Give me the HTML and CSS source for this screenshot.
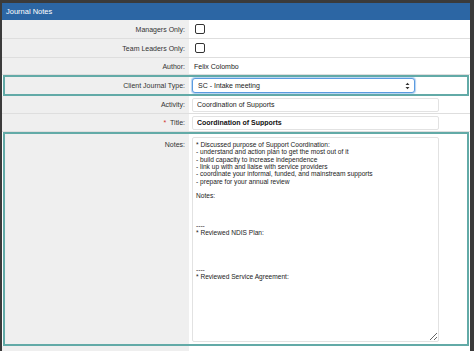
FILE: index.html
```html
<!DOCTYPE html>
<html lang="en">
<head>
  <meta charset="UTF-8">
  <title>Journal Notes</title>
  <link rel="stylesheet" href="styles.css">
</head>
<body>
  <div class="frame">
    <div class="panel">
      <div class="panel-header">Journal Notes</div>

      <div class="row row-check">
        <div class="row-label">Managers Only:</div>
        <div class="row-value"><input type="checkbox" class="check"></div>
      </div>
      <div class="row row-check">
        <div class="row-label">Team Leaders Only:</div>
        <div class="row-value"><input type="checkbox" class="check"></div>
      </div>
      <div class="row row-author">
        <div class="row-label">Author:</div>
        <div class="row-value"><span class="author">Felix Colombo</span></div>
      </div>
      <div class="row row-focus row-type">
        <div class="row-label">Client Journal Type:</div>
        <div class="row-value">
          <div class="select">
            <span>SC - Intake meeting</span>
            <svg class="select-arrows" width="5" height="8" viewBox="0 0 5 8">
              <path d="M0.5 3 L2.5 0.8 L4.5 3 Z M0.5 5 L2.5 7.2 L4.5 5 Z" fill="#333"/>
            </svg>
          </div>
        </div>
      </div>
      <div class="row row-input">
        <div class="row-label">Activity:</div>
        <div class="row-value"><input type="text" class="field" value="Coordination of Supports" spellcheck="false"></div>
      </div>
      <div class="row row-input">
        <div class="row-label"><span class="req">*</span>&nbsp; Title:</div>
        <div class="row-value"><input type="text" class="field field-bold" value="Coordination of Supports" spellcheck="false"></div>
      </div>
      <div class="row row-focus row-notes">
        <div class="row-label">Notes:</div>
        <div class="row-value">
          <textarea class="notes" spellcheck="false">* Discussed purpose of Support Coordination:
- understand and action plan to get the most out of it
- build capacity to increase independence
- link up with and liaise with service providers
- coordinate your informal, funded, and mainstream supports
- prepare for your annual review

Notes:



----
* Reviewed NDIS Plan:




----
* Reviewed Service Agreement:</textarea>
        </div>
      </div>
      <div class="row row-end">
        <div class="row-label"></div>
        <div class="row-value"></div>
      </div>
    </div>
  </div>
</body>
</html>
```

FILE: styles.css
```css
body {
  margin: 0;
  background: #3b3b3b;
  font-family: "Liberation Sans", Arial, sans-serif;
  font-size: 7px;
  color: #333;
}

.frame {
  padding: 3px 4px 0 2px;
}

.panel {
  background: #fff;
}

.panel-header {
  height: 17px;
  display: flex;
  align-items: center;
  padding-left: 4px;
  background: #2c66a4;
  color: #fff;
  font-size: 7.5px;
}

.row {
  display: flex;
  border-bottom: 1px solid #dedede;
}

.row-label {
  width: 187px;
  flex: none;
  box-sizing: border-box;
  padding-right: 4px;
  background: #efefef;
  display: flex;
  align-items: center;
  justify-content: flex-end;
  color: #333;
}

.row-value {
  flex: 1;
  display: flex;
  align-items: center;
  padding-left: 3px;
}

.row-check {
  height: 18px;
}

.row-author {
  height: 16px;
}

.row-author .author {
  padding-left: 2px;
  color: #222;
}

.row-focus {
  margin: 0 1px;
  border: 2px solid #62aaa7;
}

.row-focus .row-label {
  width: 184px;
}

.row-type {
  height: 17px;
}

.row-input {
  height: 17px;
}

.row-notes {
  height: 210px;
}

.row-notes .row-label,
.row-notes .row-value {
  align-items: flex-start;
}

.row-notes .row-label {
  padding-top: 7px;
}

.row-end {
  height: 10px;
  border-bottom: none;
}

.check {
  appearance: none;
  width: 10px;
  height: 10px;
  margin: 0 0 0 3px;
  border: 1px solid #333;
  border-radius: 2px;
  background: #fff;
  box-sizing: border-box;
}

.select {
  width: 223px;
  height: 15px;
  box-sizing: border-box;
  display: flex;
  align-items: center;
  justify-content: space-between;
  padding: 0 4px 0 5px;
  border: 1px solid #5b9be0;
  border-radius: 3px;
  box-shadow: 0 0 1px 1px rgba(91, 155, 224, 0.45);
  background: #fff;
  color: #222;
}

.field {
  width: 247px;
  height: 14px;
  box-sizing: border-box;
  margin: 0;
  padding: 0 4px;
  border: 1px solid #e2e2e2;
  border-radius: 2px;
  font-family: "Liberation Sans", Arial, sans-serif;
  font-size: 7px;
  color: #222;
  outline: none;
}

.field-bold {
  font-weight: 700;
  color: #111;
}

.req {
  color: #d0312d;
}

.notes {
  width: 247px;
  height: 205px;
  box-sizing: border-box;
  margin: 3px 0 0 0;
  padding: 3px 3px;
  border: 1px solid #e2e2e2;
  border-radius: 2px;
  font-family: "Liberation Sans", Arial, sans-serif;
  font-size: 6.6px;
  line-height: 7.33px;
  color: #222;
  resize: vertical;
  outline: none;
  overflow: hidden;
}
```
